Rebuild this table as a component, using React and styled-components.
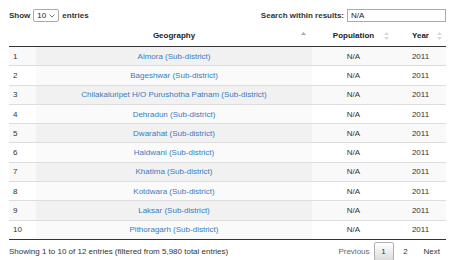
import React from "react";
import styled, { createGlobalStyle } from "styled-components";

const Global = createGlobalStyle`
  body {
    margin: 0;
    background: #fff;
    font-family: "Liberation Sans", Arial, sans-serif;
    font-size: 8px;
    color: #333;
  }
`;

const Wrapper = styled.div`
  width: 437px;
  margin: 0 9px;
`;

const TopBar = styled.div`
  display: flex;
  justify-content: space-between;
  align-items: center;
  height: 13px;
  padding-top: 9px;
  margin-bottom: 3px;
  font-weight: bold;
  color: #333;
`;

const Length = styled.label`
  display: flex;
  align-items: center;
  gap: 3px;
`;

const Select = styled.div`
  display: flex;
  align-items: center;
  justify-content: space-between;
  width: 26px;
  height: 13px;
  box-sizing: border-box;
  border: 1px solid #aaa;
  border-radius: 2px;
  padding: 0 3px;
  font-weight: normal;
  color: #222;
`;

const Search = styled.label`
  display: flex;
  align-items: center;
  gap: 3px;
`;

const Input = styled.div`
  width: 99px;
  height: 13px;
  box-sizing: border-box;
  border: 1px solid #aaa;
  padding: 0 3px;
  line-height: 11px;
  font-weight: normal;
  color: #222;
`;

const Table = styled.table`
  width: 100%;
  border-collapse: collapse;
  table-layout: fixed;
  border-bottom: 1px solid #333;
`;

const Th = styled.th`
  position: relative;
  height: 21px;
  padding: 0 4px;
  font-weight: bold;
  text-align: center;
  border-bottom: 1px solid #333;
  color: #222;
`;

const SortIcon = styled.svg`
  position: absolute;
  right: ${(p) => p.$right}px;
  top: 7px;
`;

const Tr = styled.tr`
  background: ${(p) => (p.$odd ? "#f9f9f9" : "#fff")};
`;

const Td = styled.td`
  height: 18.3px;
  padding: 0 4px;
  border-top: 1px solid #ddd;
  text-align: ${(p) => p.$align || "center"};
  color: #333;
  background: ${(p) => (p.$sorted ? (p.$odd ? "#f1f1f1" : "#fafafa") : "transparent")};
`;

const Link = styled.a`
  color: #3a7bc0;
  text-decoration: none;
`;

const Footer = styled.div`
  display: flex;
  justify-content: space-between;
  align-items: center;
  height: 20px;
  padding-top: 2px;
`;

const Info = styled.div`
  color: #333;
`;

const Pager = styled.div`
  display: flex;
  align-items: center;
  gap: 2px;
`;

const PageBtn = styled.span`
  display: flex;
  align-items: center;
  justify-content: center;
  min-width: 20px;
  height: 19px;
  padding: 0 ${(p) => p.$pad ?? 0}px;
  box-sizing: border-box;
  color: ${(p) => (p.$muted ? "#666" : "#333")};
  border: 1px solid ${(p) => (p.$current ? "#b0b0b0" : "transparent")};
  border-radius: 2px;
  background: ${(p) =>
    p.$current ? "linear-gradient(to bottom, #fff 0%, #dcdcdc 100%)" : "transparent"};
`;

const rows = [
  "Almora",
  "Bageshwar",
  "Chilakaluripet H/O Purushotha Patnam",
  "Dehradun",
  "Dwarahat",
  "Haldwani",
  "Khatima",
  "Kotdwara",
  "Laksar",
  "Pithoragarh",
];

function BothArrows({ right }) {
  return (
    <SortIcon $right={right} width="5" height="8" viewBox="0 0 5 8">
      <path d="M2.5 0 L5 3 L0 3 Z" fill="#d8d8d8" />
      <path d="M2.5 8 L5 5 L0 5 Z" fill="#d8d8d8" />
    </SortIcon>
  );
}

function AscArrow({ right }) {
  return (
    <SortIcon $right={right} width="5" height="8" viewBox="0 0 5 8">
      <path d="M2.5 0 L5 3 L0 3 Z" fill="#9fa8c8" />
    </SortIcon>
  );
}

export default function App() {
  return (
    <Wrapper>
      <Global />
      <TopBar>
        <Length>
          Show
          <Select>
            <span>10</span>
            <svg width="6" height="4" viewBox="0 0 6 4">
              <path d="M0.5 0.5 L3 3 L5.5 0.5" fill="none" stroke="#666" strokeWidth="0.9" />
            </svg>
          </Select>
          entries
        </Length>
        <Search>
          Search within results:
          <Input>N/A</Input>
        </Search>
      </TopBar>
      <Table>
        <colgroup>
          <col style={{ width: 27 }} />
          <col style={{ width: 276 }} />
          <col style={{ width: 83 }} />
          <col style={{ width: 51 }} />
        </colgroup>
        <thead>
          <tr>
            <Th />
            <Th>
              Geography
              <AscArrow right={6} />
            </Th>
            <Th>
              Population
              <BothArrows right={6} />
            </Th>
            <Th>
              Year
              <BothArrows right={4} />
            </Th>
          </tr>
        </thead>
        <tbody>
          {rows.map((name, i) => {
            const odd = i % 2 === 0;
            return (
              <Tr key={name} $odd={odd}>
                <Td $align="left">{i + 1}</Td>
                <Td $sorted $odd={odd}>
                  <Link href="#">{name} (Sub-district)</Link>
                </Td>
                <Td>N/A</Td>
                <Td>2011</Td>
              </Tr>
            );
          })}
        </tbody>
      </Table>
      <Footer>
        <Info>Showing 1 to 10 of 12 entries (filtered from 5,980 total entries)</Info>
        <Pager>
          <PageBtn $muted $pad={1}>Previous</PageBtn>
          <PageBtn $current>1</PageBtn>
          <PageBtn>2</PageBtn>
          <PageBtn $pad={5}>Next</PageBtn>
        </Pager>
      </Footer>
    </Wrapper>
  );
}
